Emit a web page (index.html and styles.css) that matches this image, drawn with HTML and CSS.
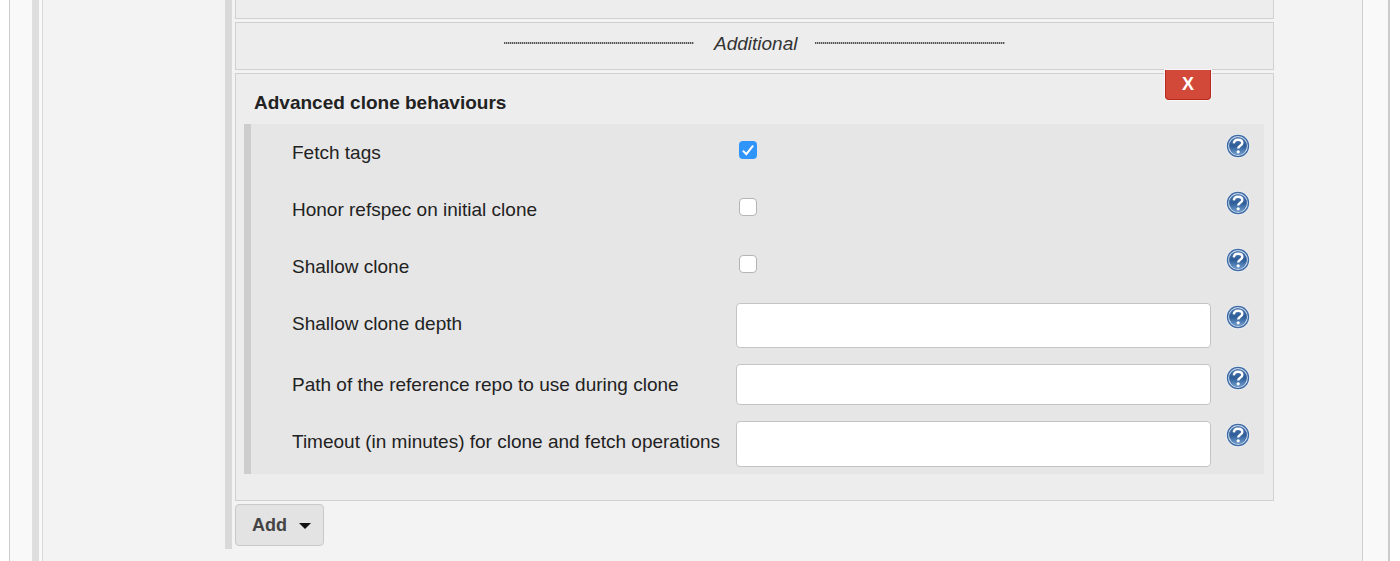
FILE: index.html
```html
<!DOCTYPE html>
<html lang="en">
<head>
<meta charset="utf-8">
<title>Advanced clone behaviours</title>
<link rel="stylesheet" href="styles.css">
</head>
<body>
<svg class="defs" width="0" height="0" aria-hidden="true">
  <defs>
    <linearGradient id="helpFill" x1="0" y1="0" x2="0" y2="1">
      <stop offset="0" stop-color="#4d78ae"/>
      <stop offset="0.5" stop-color="#2d5c98"/>
      <stop offset="1" stop-color="#6f9ccd"/>
    </linearGradient>
    <symbol id="help" viewBox="0 0 24 24">
      <circle cx="12" cy="12" r="12" fill="#eef2f7"/>
      <circle cx="12" cy="12" r="11.2" fill="#3f6ba5"/>
      <circle cx="12" cy="12" r="9.3" fill="none" stroke="#c9d8ea" stroke-width="1.2"/>
      <circle cx="12" cy="12" r="8.7" fill="url(#helpFill)"/>
      <path d="M7.8 9.4c.2-2.4 2-3.6 4.3-3.6 2.5 0 4.2 1.3 4.2 3.3 0 2.8-4.1 2.7-4.1 5.4" fill="none" stroke="#fff" stroke-width="2.4"/>
      <circle cx="12.2" cy="17.8" r="1.6" fill="#fff"/>
    </symbol>
  </defs>
</svg>
<div class="outer">
  <div class="rail">
    <div class="panel">
      <div class="block">
        <div class="box box-top"></div>
        <div class="box box-divider">
          <span class="rule"></span>
          <em class="divider-label">Additional</em>
          <span class="rule"></span>
        </div>
        <div class="box box-advanced">
          <button class="delete" type="button">X</button>
          <h3 class="heading">Advanced clone behaviours</h3>
          <div class="fields">
            <div class="row">
              <label class="label">Fetch tags</label>
              <div class="control"><span class="check check-on">
                <svg viewBox="0 0 18 18" width="18" height="18"><path d="M3.9 9.6l3.4 3.6 6.8-8.6" fill="none" stroke="#fff" stroke-width="2"/></svg>
              </span></div>
              <svg class="help-icon"><use href="#help"/></svg>
            </div>
            <div class="row">
              <label class="label">Honor refspec on initial clone</label>
              <div class="control"><span class="check"></span></div>
              <svg class="help-icon"><use href="#help"/></svg>
            </div>
            <div class="row">
              <label class="label">Shallow clone</label>
              <div class="control"><span class="check"></span></div>
              <svg class="help-icon"><use href="#help"/></svg>
            </div>
            <div class="row">
              <label class="label">Shallow clone depth</label>
              <div class="control"><input class="text tall" type="text"></div>
              <svg class="help-icon"><use href="#help"/></svg>
            </div>
            <div class="row">
              <label class="label">Path of the reference repo to use during clone</label>
              <div class="control"><input class="text short" type="text"></div>
              <svg class="help-icon"><use href="#help"/></svg>
            </div>
            <div class="row">
              <label class="label">Timeout (in minutes) for clone and fetch operations</label>
              <div class="control"><input class="text tallest" type="text"></div>
              <svg class="help-icon"><use href="#help"/></svg>
            </div>
          </div>
        </div>
        <button class="add" type="button">Add<span class="caret"></span></button>
      </div>
    </div>
  </div>
</div>
</body>
</html>
```
FILE: styles.css
```css
* { box-sizing: border-box; }
html, body { margin: 0; height: 561px; overflow: hidden; background: #fff; }
body { font-family: "Liberation Sans", Arial, sans-serif; color: #222; font-size: 19px; }
.defs { display: block; height: 0; }

.outer {
  width: 1381px;
  height: 561px;
  margin-left: 9px;
  padding: 0 25px 0 22px;
  background: #f9f9f9;
  border-left: 1px solid #ccc;
  border-right: 2px solid #ccc;
}
.rail {
  height: 561px;
  padding-left: 3px;
  border-left: 7px solid #dedede;
}
.panel {
  height: 561px;
  padding-left: 182px;
  background: #f3f3f3;
  border-left: 1px solid #d8d8d8;
  border-right: 1px solid #d0d0d0;
}
.block {
  width: 1049px;
  height: 549px;
  padding-left: 3px;
  border-left: 7px solid #d9d9d9;
}

.box { background: #ededed; border: 1px solid #d0d0d0; }
.box-top { height: 19px; border-top: 0; margin-bottom: 3px; }
.box-divider {
  height: 48px;
  margin-bottom: 3px;
  display: flex;
  align-items: center;
  justify-content: center;
  gap: 20px;
}
.rule {
  width: 190px;
  height: 2px;
  margin-top: -6px;
  background: repeating-linear-gradient(90deg, #555 0 1px, #b5b5b5 1px 2px);
}
.divider-label {
  width: 84px;
  margin-right: -3px;
  margin-top: -5px;
  font-size: 19px;
  color: #333;
  white-space: nowrap;
}

.box-advanced { position: relative; height: 428px; padding: 0 9px 0 8px; }
.delete {
  position: absolute;
  top: -4px;
  right: 62px;
  width: 46px;
  height: 30px;
  padding: 0;
  background: #d24939;
  color: #fff;
  font: bold 18px "Liberation Sans", Arial, sans-serif;
  border: 1px solid #b8281c;
  border-top: 0;
  border-radius: 0 0 4px 4px;
  box-shadow: 0 0 0 1px #f7f7f7;
}
.heading {
  margin: 0;
  height: 50px;
  padding: 18px 0 0 10px;
  font-size: 19px;
  line-height: 21px;
  font-weight: bold;
  color: #222;
}
.fields {
  height: 350px;
  padding-left: 0;
  background: #e6e6e6;
  border-left: 7px solid #cdcdcd;
}
.row {
  display: grid;
  grid-template-columns: 444px 475px 53px;
  align-items: center;
  padding: 8px 0 8px 41px;
  min-height: 57px;
}
.label { align-self: start; margin-top: 10px; color: #222; white-space: nowrap; line-height: 21px; }
.control { display: flex; align-items: center; min-height: 41px; }
.check {
  display: block;
  width: 18px;
  height: 18px;
  margin: -5px 0 0 3px;
  background: #fff;
  border: 1.5px solid #b5b5b5;
  border-radius: 4px;
}
.check-on { background: #2f95fb; border: 0; }
.check-on svg { display: block; }
.text {
  display: block;
  width: 475px;
  padding: 0;
  background: #fff;
  border: 1px solid #c4c4c4;
  border-radius: 4px;
}
.tall { height: 45px; }
.short { height: 41px; }
.tallest { height: 46px; }
.help-icon {
  align-self: start;
  width: 24px;
  height: 24px;
  margin: 2px 0 0 15px;
}

.add {
  display: flex;
  align-items: center;
  width: 89px;
  height: 42px;
  margin-top: 3px;
  padding: 0 0 0 16px;
  background: #e3e3e3;
  color: #444;
  font: bold 18px "Liberation Sans", Arial, sans-serif;
  border: 1px solid #c9c9c9;
  border-radius: 4px;
}
.caret {
  width: 0;
  height: 0;
  margin: 2px 0 0 12px;
  border-left: 6px solid transparent;
  border-right: 6px solid transparent;
  border-top: 6px solid #111;
}
```
